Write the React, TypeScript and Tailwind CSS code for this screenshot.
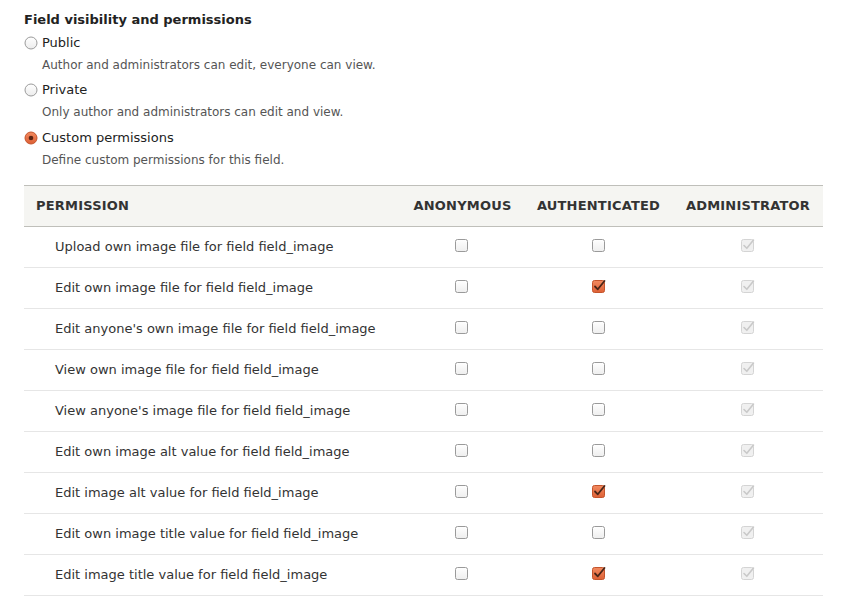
const font = { fontFamily: '"DejaVu Sans", Verdana, sans-serif' };

type Perm = { label: string; auth: boolean };

const perms: Perm[] = [
  { label: "Upload own image file for field field_image", auth: false },
  { label: "Edit own image file for field field_image", auth: true },
  { label: "Edit anyone's own image file for field field_image", auth: false },
  { label: "View own image file for field field_image", auth: false },
  { label: "View anyone's image file for field field_image", auth: false },
  { label: "Edit own image alt value for field field_image", auth: false },
  { label: "Edit image alt value for field field_image", auth: true },
  { label: "Edit own image title value for field field_image", auth: false },
  { label: "Edit image title value for field field_image", auth: true },
];

function Radio({ checked }: { checked?: boolean }) {
  if (checked) {
    return (
      <svg width="14" height="14" viewBox="0 0 14 14" className="shrink-0">
        <defs>
          <linearGradient id="rg" x1="0" y1="0" x2="0" y2="1">
            <stop offset="0" stopColor="#f28a60" />
            <stop offset="1" stopColor="#dd5f34" />
          </linearGradient>
        </defs>
        <circle cx="7" cy="7" r="6" fill="url(#rg)" stroke="#c4542c" />
        <circle cx="7" cy="7" r="2.3" fill="#5a2412" />
      </svg>
    );
  }
  return (
    <svg width="14" height="14" viewBox="0 0 14 14" className="shrink-0">
      <defs>
        <linearGradient id="rw" x1="0" y1="0" x2="0" y2="1">
          <stop offset="0" stopColor="#ffffff" />
          <stop offset="1" stopColor="#ececec" />
        </linearGradient>
      </defs>
      <circle cx="7" cy="7" r="6" fill="url(#rw)" stroke="#9b9b9b" />
    </svg>
  );
}

function Check({ state }: { state: "off" | "on" | "disabled" }) {
  if (state === "on") {
    return (
      <svg width="14" height="14" viewBox="0 0 14 14">
        <defs>
          <linearGradient id="cg" x1="0" y1="0" x2="0" y2="1">
            <stop offset="0" stopColor="#f28a60" />
            <stop offset="1" stopColor="#de6136" />
          </linearGradient>
        </defs>
        <rect x="0.5" y="1.5" width="12" height="12" rx="2" fill="url(#cg)" stroke="#c4542c" />
        <path d="M3 7.5 L5.8 10.3 L12.5 2" fill="none" stroke="#4a2618" strokeWidth="1.8" strokeLinecap="round" strokeLinejoin="round" />
      </svg>
    );
  }
  if (state === "disabled") {
    return (
      <svg width="14" height="14" viewBox="0 0 14 14">
        <rect x="0.5" y="1.5" width="12" height="12" rx="2" fill="#f0f0f0" stroke="#d4d4d4" />
        <path d="M3 7.5 L5.8 10.3 L12.5 2" fill="none" stroke="#c9c9c9" strokeWidth="1.6" strokeLinecap="round" strokeLinejoin="round" />
      </svg>
    );
  }
  return (
    <svg width="14" height="14" viewBox="0 0 14 14">
      <defs>
        <linearGradient id="cw" x1="0" y1="0" x2="0" y2="1">
          <stop offset="0" stopColor="#ffffff" />
          <stop offset="1" stopColor="#eeeeee" />
        </linearGradient>
      </defs>
      <rect x="0.5" y="1.5" width="12" height="12" rx="2" fill="url(#cw)" stroke="#9a9a9a" />
    </svg>
  );
}

function Option({
  label,
  desc,
  checked,
  className = "",
}: {
  label: string;
  desc: string;
  checked?: boolean;
  className?: string;
}) {
  return (
    <div className={"mb-[6px] " + className}>
      <div className="flex h-5 items-center gap-[4px] text-[13px] text-[#222]">
        <Radio checked={checked} />
        <span>{label}</span>
      </div>
      <div className="mt-[3px] h-[18px] pl-[18px] text-[12px] leading-[18px] text-[#555]">{desc}</div>
    </div>
  );
}

export default function App() {
  return (
    <div className="min-h-[604px] w-[845px] bg-white px-6 pt-[10px]" style={font}>
      <h2 className="h-5 text-[13px] font-bold leading-5 text-[#222]">Field visibility and permissions</h2>
      <div className="mt-[3px]">
        <Option label="Public" desc="Author and administrators can edit, everyone can view." />
        <Option label="Private" desc="Only author and administrators can edit and view." />
        <Option label="Custom permissions" desc="Define custom permissions for this field." checked className="mt-[7px]" />
      </div>

      <table className="mt-[16px] w-[799px] table-fixed border-collapse">
        <colgroup>
          <col className="w-[377px]" />
          <col className="w-[123px]" />
          <col className="w-[149px]" />
          <col className="w-[150px]" />
        </colgroup>
        <thead>
          <tr className="h-[41px] border-y border-[#bfbfba] bg-[#f5f5f2] text-[13px] font-bold uppercase tracking-[0.2px] text-[#333]">
            <th className="px-3 text-left">Permission</th>
            <th className="px-2 text-center">Anonymous</th>
            <th className="px-2 text-center">Authenticated</th>
            <th className="px-2 text-center">Administrator</th>
          </tr>
        </thead>
        <tbody>
          {perms.map((p) => (
            <tr key={p.label} className="h-[41px] border-b border-[#e6e6e6] text-[13px] text-[#333]">
              <td className="pl-[31px]">{p.label}</td>
              <td>
                <div className="mb-[5px] flex justify-center pr-[2px]">
                  <Check state="off" />
                </div>
              </td>
              <td>
                <div className="mb-[5px] flex justify-center">
                  <Check state={p.auth ? "on" : "off"} />
                </div>
              </td>
              <td>
                <div className="mb-[5px] flex justify-center">
                  <Check state="disabled" />
                </div>
              </td>
            </tr>
          ))}
        </tbody>
      </table>
    </div>
  );
}
